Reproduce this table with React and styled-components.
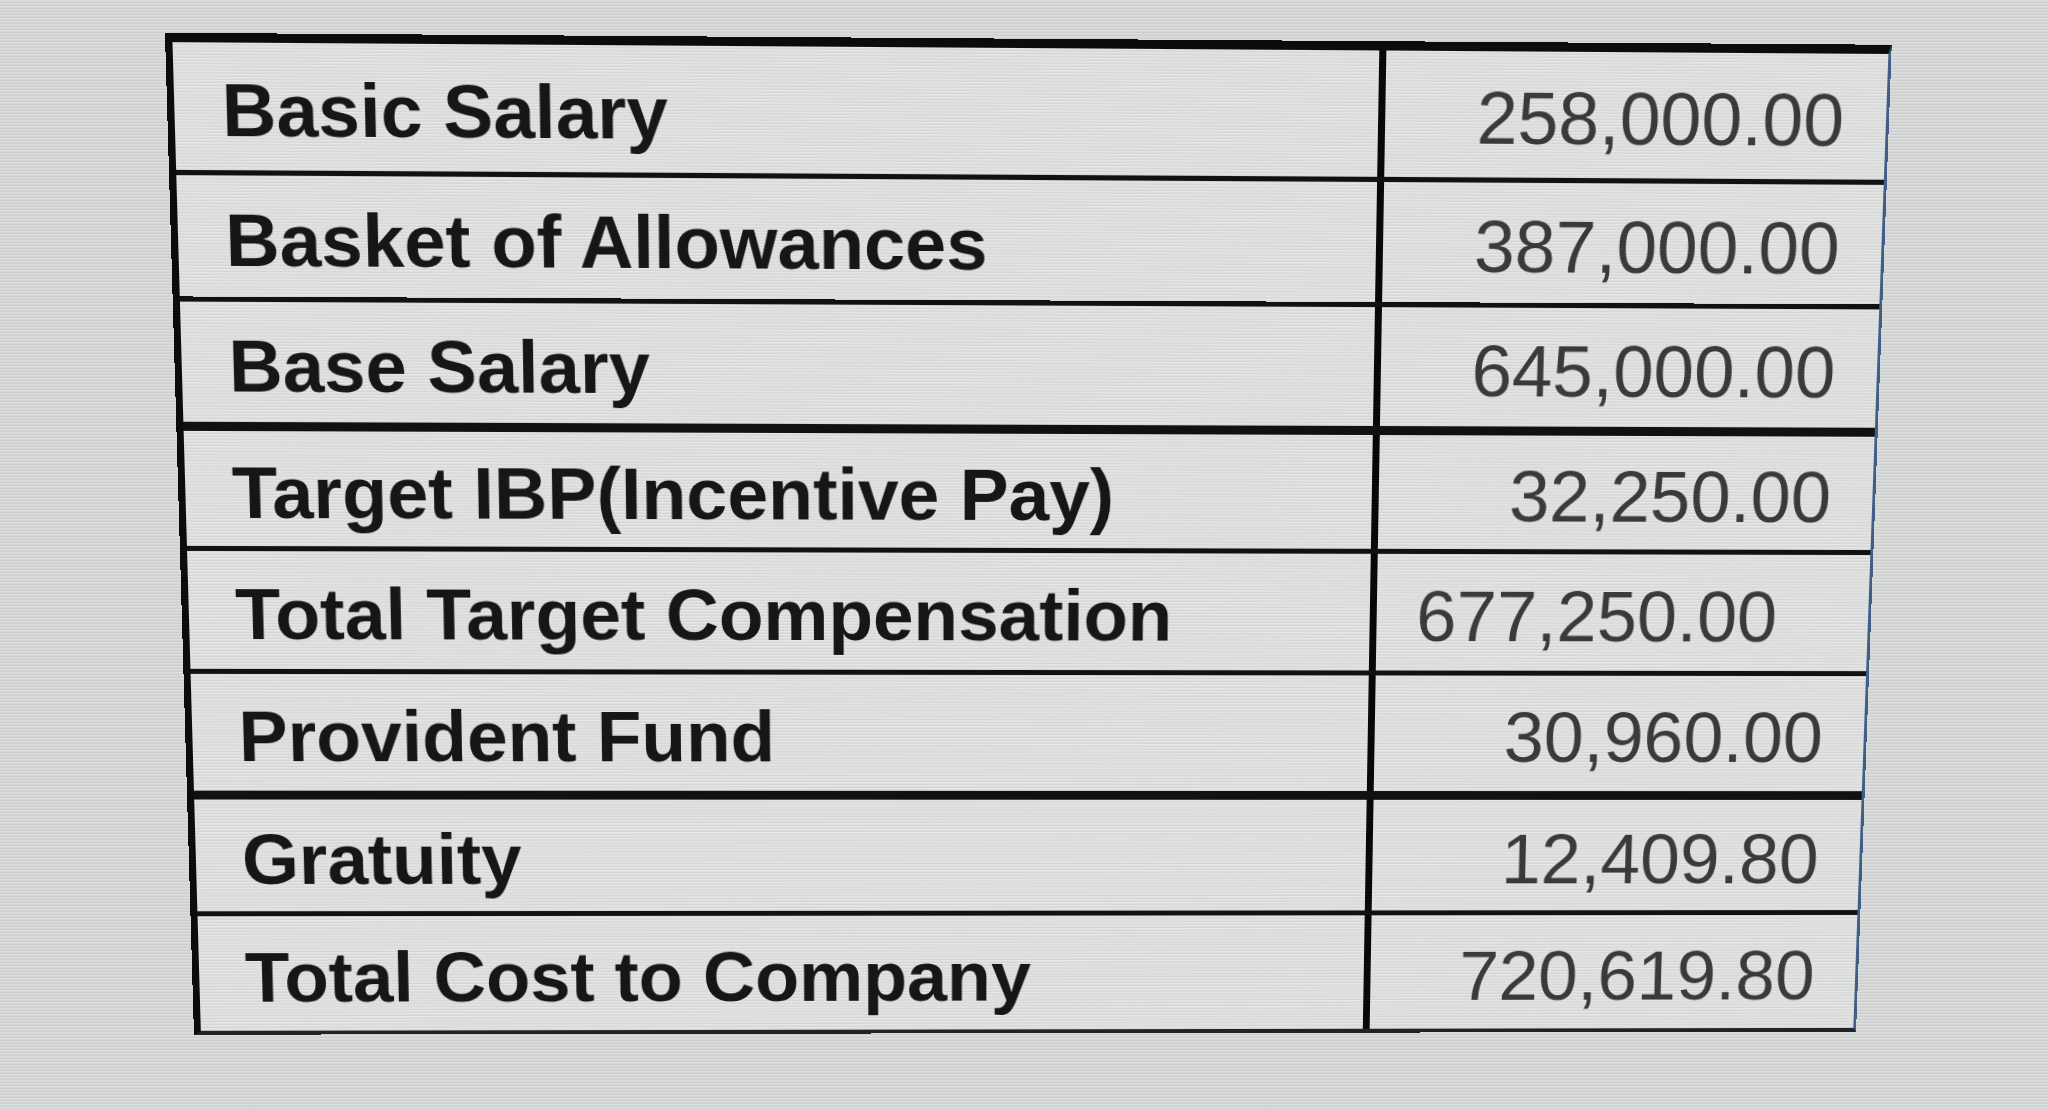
import React from 'react';
import styled, { createGlobalStyle } from 'styled-components';

// Global Styles
const GlobalStyle = createGlobalStyle`
  html, body {
    margin: 0;
    padding: 0;
  }
  body {
    font-family: 'Liberation Sans', Arial, sans-serif;
    background-color: #d5d7d7;
  }
`;

// Styled Components
const Page = styled.div`
  height: 1109px;
  box-sizing: border-box;
  padding: 47px 0 0 186px;
  overflow: hidden;
  background-color: #d5d7d7;
  /* faint screen lines, the reference is a photo of a monitor */
  background-image: repeating-linear-gradient(
    to bottom,
    rgba(255, 255, 255, 0.18) 0px,
    rgba(255, 255, 255, 0.18) 1px,
    rgba(0, 0, 0, 0.04) 2px,
    rgba(0, 0, 0, 0.04) 3px
  );
`;

const Table = styled.div`
  width: 1694px;
  display: flex;
  flex-direction: column;
  background-color: #dfe0e0;
  background-image: repeating-linear-gradient(
    to bottom,
    rgba(255, 255, 255, 0.22) 0px,
    rgba(255, 255, 255, 0.22) 1px,
    rgba(0, 0, 0, 0.05) 2px,
    rgba(0, 0, 0, 0.05) 3px
  );
  border-top: 9px solid #0c0c0c;
  border-left: 7px solid #0c0c0c;
  border-right: 3px solid #3f5f86;
  border-bottom: 4px solid #222;
  box-sizing: border-box;
  transform: perspective(2000px) rotateX(-4.4deg) rotateY(1deg) rotateZ(0.22deg);
`;

const Row = styled.div`
  display: grid;
  grid-template-columns: 1fr 498px;
  height: 123px;
  box-sizing: border-box;
  border-top: ${p => (p.$first ? 0 : p.$thick ? 9 : 5)}px solid #111;
`;

const Label = styled.div`
  display: flex;
  align-items: center;
  padding: 6px 0 0 46px;
  border-right: 7px solid #080808;
  font-size: 73px;
  font-weight: bold;
  color: #161616;
  white-space: nowrap;
`;

const Amount = styled.div`
  display: flex;
  align-items: center;
  justify-content: ${p => (p.$left ? 'flex-start' : 'flex-end')};
  padding: 6px 42px 0 40px;
  font-size: 73px;
  color: #383a3b;
  white-space: nowrap;
`;

const rows = [
  { label: 'Basic Salary', amount: '258,000.00' },
  { label: 'Basket of Allowances', amount: '387,000.00' },
  { label: 'Base Salary', amount: '645,000.00' },
  { label: 'Target IBP(Incentive Pay)', amount: '32,250.00', thick: true },
  { label: 'Total Target Compensation', amount: '677,250.00', left: true },
  { label: 'Provident Fund', amount: '30,960.00' },
  { label: 'Gratuity', amount: '12,409.80', thick: true },
  { label: 'Total Cost to Company', amount: '720,619.80' },
];

const App = () => {
  return (
    <Page>
      <GlobalStyle />
      <Table>
        {rows.map((r, idx) => (
          <Row key={r.label} $first={idx === 0} $thick={r.thick}>
            <Label>{r.label}</Label>
            <Amount $left={r.left}>{r.amount}</Amount>
          </Row>
        ))}
      </Table>
    </Page>
  );
};

export default App;
